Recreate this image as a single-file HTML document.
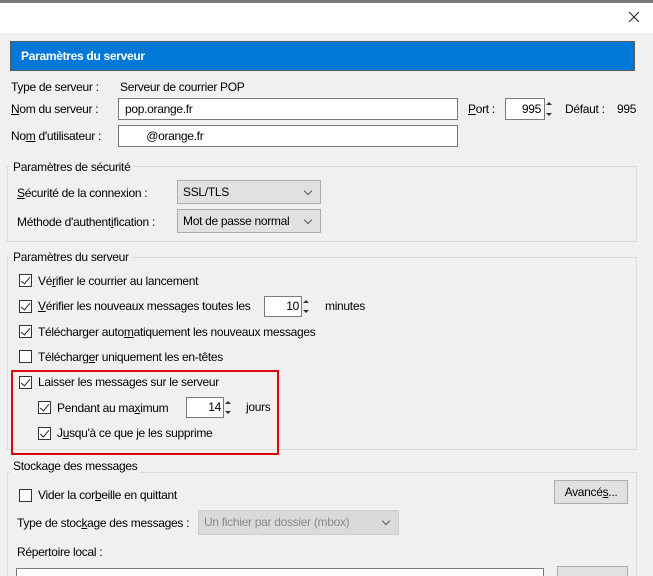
<!DOCTYPE html>
<html style="width:653px;height:576px;overflow:hidden"><head><meta charset="utf-8"><style>
*{box-sizing:border-box;margin:0;padding:0}
body{width:653px;height:576px;overflow:hidden;background:#f0f0f0;font-family:"Liberation Sans",sans-serif;font-size:12px;color:#000;position:relative;letter-spacing:-0.3px}
.a{position:absolute;white-space:nowrap}
.t{position:absolute;white-space:nowrap;line-height:14px}
.in{position:absolute;background:#fff;border:1px solid #7a7a7a;padding-left:6px;line-height:20px}
.sel{position:absolute;background:#e1e1e1;border:1px solid #adadad;padding-left:5px;line-height:22px}
.sel:after{content:"";position:absolute;right:9px;top:7px;width:5px;height:5px;border-right:1px solid #555;border-bottom:1px solid #555;transform:rotate(45deg)}
.grp{position:absolute;border:1px solid #dcdcdc}
.lg{position:absolute;background:#f0f0f0;padding:0 3px;line-height:14px}
.cb{position:absolute;width:13px;height:13px;border:1px solid #333;background:#fff}
.cb.c:after{content:"";position:absolute;left:3px;top:0px;width:4px;height:8px;border-right:1.4px solid #222;border-bottom:1.4px solid #222;transform:rotate(40deg)}
.sp{position:absolute;width:8px;background:#f0f0f0}
.sp:before{content:"";position:absolute;left:1px;top:3px;border:3px solid transparent;border-bottom:3px solid #333;border-top:0}
.sp:after{content:"";position:absolute;left:1px;bottom:3px;border:3px solid transparent;border-top:3px solid #333;border-bottom:0}
.btn{position:absolute;background:#e1e1e1;border:1px solid #adadad;text-align:center;line-height:22px}
u{text-decoration:underline}
</style></head><body>
<div class="a" style="left:0;top:0;width:653px;height:3px;background:#7a7a7a"></div>
<div class="a" style="left:0;top:3px;width:653px;height:30px;background:#fff"></div>
<svg class="a" style="left:628px;top:11px" width="12" height="12"><path d="M1 1L11 11M11 1L1 11" stroke="#222" stroke-width="1"/></svg>
<div class="a" style="left:10px;top:41px;width:625px;height:30px;background:#0078d7;border:1px solid #5a5a5a;color:#fff;font-weight:bold;line-height:28px;padding-left:10px">Paramètres du serveur</div>

<div class="t" style="left:11px;top:80px">Type de serveur :</div>
<div class="t" style="left:120px;top:80px">Serveur de courrier POP</div>
<div class="t" style="left:11px;top:102px"><u>N</u>om du serveur :</div>
<div class="in" style="left:118px;top:98px;width:340px;height:22px">pop.orange.fr</div>
<div class="t" style="left:468px;top:102px"><u>P</u>ort :</div>
<div class="in" style="left:505px;top:98px;width:40px;height:22px;text-align:right;padding-right:3px">995</div>
<div class="sp" style="left:545px;top:99px;height:20px"></div>
<div class="t" style="left:565px;top:102px">Défaut :</div>
<div class="t" style="left:617px;top:102px">995</div>
<div class="t" style="left:11px;top:129px">No<u>m</u> d'utilisateur :</div>
<div class="in" style="left:118px;top:125px;width:340px;height:22px;padding-left:9px">&nbsp;&nbsp;&nbsp;&nbsp;&nbsp;&nbsp;@orange.fr</div>

<div class="grp" style="left:7px;top:166px;width:630px;height:76px"></div>
<div class="lg" style="left:10px;top:160px">Paramètres de sécurité</div>
<div class="t" style="left:17px;top:186px"><u>S</u>écurité de la connexion :</div>
<div class="sel" style="left:177px;top:180px;width:144px;height:24px">SSL/TLS</div>
<div class="t" style="left:17px;top:215px">Méthode d'authent<u>i</u>fication :</div>
<div class="sel" style="left:177px;top:209px;width:144px;height:24px">Mot de passe normal</div>

<div class="grp" style="left:7px;top:257px;width:630px;height:193px"></div>
<div class="lg" style="left:10px;top:250px">Paramètres du serveur</div>
<div class="cb c" style="left:19px;top:274px"></div><div class="t" style="left:38px;top:274px">Vé<u>r</u>ifier le courrier au lancement</div>
<div class="cb c" style="left:19px;top:300px"></div><div class="t" style="left:38px;top:299px"><u>V</u>érifier les nouveaux messages toutes les</div>
<div class="in" style="left:264px;top:296px;width:38px;height:21px;text-align:right;padding-right:2px;line-height:19px">10</div>
<div class="sp" style="left:302px;top:297px;height:19px"></div>
<div class="t" style="left:325px;top:299px">minutes</div>
<div class="cb c" style="left:19px;top:325px"></div><div class="t" style="left:38px;top:325px">Télécharger auto<u>m</u>atiquement les nouveaux messages</div>
<div class="cb" style="left:19px;top:350px"></div><div class="t" style="left:38px;top:350px">Télécharg<u>e</u>r uniquement les en-têtes</div>
<div class="cb c" style="left:19px;top:376px"></div><div class="t" style="left:38px;top:375px">Laisser les messa<u>g</u>es sur le serveur</div>
<div class="cb c" style="left:38px;top:401px"></div><div class="t" style="left:57px;top:401px">Pendant au ma<u>x</u>imum</div>
<div class="in" style="left:186px;top:397px;width:38px;height:21px;text-align:right;padding-right:2px;line-height:19px">14</div>
<div class="sp" style="left:224px;top:398px;height:19px"></div>
<div class="t" style="left:246px;top:400px">jours</div>
<div class="cb c" style="left:38px;top:427px"></div><div class="t" style="left:57px;top:426px">J<u>u</u>squ'à ce que je les supprime</div>
<div class="a" style="left:11px;top:370px;width:268px;height:85px;border:2px solid #e0000e"></div>

<div class="grp" style="left:7px;top:472px;width:630px;height:120px"></div>
<div class="lg" style="left:10px;top:459px">Stockage des messages</div>
<div class="cb" style="left:19px;top:489px"></div><div class="t" style="left:38px;top:488px">Vider la cor<u>b</u>eille en quittant</div>
<div class="btn" style="left:554px;top:480px;width:74px;height:24px">Avancé<u>s</u>...</div>
<div class="t" style="left:17px;top:516px">Type de stoc<u>k</u>age des messages :</div>
<div class="sel" style="left:198px;top:510px;width:201px;height:25px;color:#8a8a8a;background:#dadada;border-color:#cfcfcf">Un fichier par dossier (mbox)</div>
<div class="t" style="left:17px;top:545px">Répertoire local :</div>
<div class="in" style="left:16px;top:568px;width:528px;height:22px"></div>
<div class="btn" style="left:557px;top:566px;width:71px;height:24px"></div>
</body></html>
